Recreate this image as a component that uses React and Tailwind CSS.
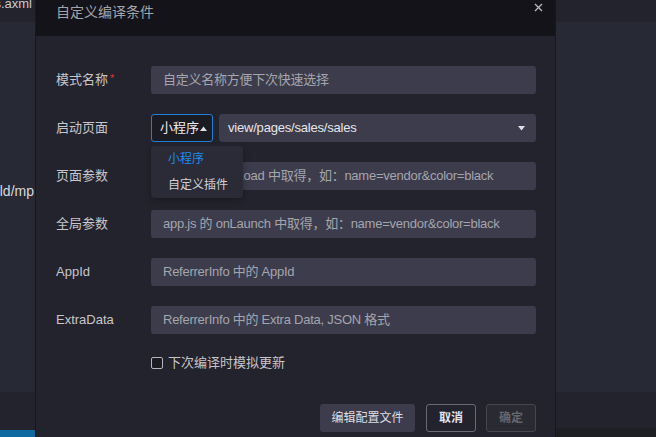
import React from "react";

const font = { fontFamily: '"Liberation Sans", "Noto Sans CJK SC", sans-serif' };

function Field({ label, required, children }) {
  return (
    <div className="flex items-center h-[28px]">
      <div className="w-[95px] text-[13px] text-[#c6c6cb] flex items-center">
        {label}
        {required && <span className="text-[#e0303a] ml-[2px] text-[11px] -mt-[4px]">*</span>}
      </div>
      <div className="flex-1 h-full">{children}</div>
    </div>
  );
}

function Input({ text }) {
  return (
    <div className="h-full w-full bg-[#3c3c4c] rounded-[3px] pl-[12px] flex items-center text-[13px] tracking-[-0.25px] text-[#a5a5ac] whitespace-nowrap overflow-hidden">
      {text}
    </div>
  );
}

export default function App() {
  return (
    <div className="w-[656px] h-[437px] overflow-hidden flex bg-[#22232c]" style={font}>
      {/* left background */}
      <div className="w-[35px] shrink-0 flex flex-col">
        <div className="h-[22px] bg-[#22232c] overflow-hidden flex justify-end">
          <div className="whitespace-nowrap text-[13px] text-[#c9c9cc] leading-[16px] -mt-[4px] pr-[3px]">pages/sales.axml</div>
        </div>
        <div className="h-[370px] bg-[#272a35] overflow-hidden flex flex-col">
          <div className="mt-[160px] flex justify-end overflow-hidden pr-[1px]">
            <div className="whitespace-nowrap text-[14px] text-[#d8d8dc] leading-[18px]">/build/mp</div>
          </div>
        </div>
        <div className="h-[38px] bg-[#22232c]" />
        <div className="flex-1 bg-[#0e6aa0]" />
      </div>

      {/* dialog */}
      <div className="w-[521px] shrink-0 bg-[#23232d] border-l border-r border-[#17171d] flex flex-col relative">
        <div className="h-[36px] bg-[#131319] flex items-start justify-between pl-[20px] pr-[12px]">
          <div className="text-[14px] leading-[20px] mt-[2px] text-[#a3a3aa]">自定义编译条件</div>
          <svg width="9" height="9" viewBox="0 0 9 9" className="mt-[3px]">
            <path d="M1 1 L8 8 M8 1 L1 8" stroke="#b9b9be" strokeWidth="1.3" />
          </svg>
        </div>

        <div className="flex flex-col pl-[20px] pr-[19px] pt-[30px] gap-[20px]">
          <Field label="模式名称" required>
            <Input text="自定义名称方便下次快速选择" />
          </Field>
          <Field label="启动页面">
            <div className="flex h-full gap-[6px] relative">
              <div className="w-[62px] h-full border border-[#1e80d8] rounded-[3px] bg-[#1b1b23] flex items-center pl-[8px] text-[13px] text-[#ececef]">
                小程序
                <svg width="7" height="5" viewBox="0 0 7 5" className="ml-[1px]">
                  <path d="M0 5 L3.5 0.5 L7 5 Z" fill="#e0e0e4" />
                </svg>
              </div>
              <div className="flex-1 h-full bg-[#3c3c4c] rounded-[3px] pl-[9px] pr-[11px] flex items-center justify-between text-[13px] tracking-[-0.2px] text-[#e6e6ea]">
                <span>view/pages/sales/sales</span>
                <svg width="7" height="5" viewBox="0 0 7 5">
                  <path d="M0 0 L7 0 L3.5 4.5 Z" fill="#e0e0e4" />
                </svg>
              </div>
              <div className="absolute left-0 top-[32px] w-[92px] h-[52px] bg-[#2b2b37] rounded-[4px] flex flex-col z-10 shadow-[0_2px_6px_rgba(0,0,0,0.3)]">
                <div className="h-[26px] flex items-center pl-[17px] text-[12px] text-[#1d8cf0]">小程序</div>
                <div className="h-[26px] flex items-center pl-[17px] text-[12px] text-[#d0d0d4]">自定义插件</div>
              </div>
            </div>
          </Field>
          <Field label="页面参数">
            <Input text="page.js 的 onLoad 中取得，如：name=vendor&color=black" />
          </Field>
          <Field label="全局参数">
            <Input text="app.js 的 onLaunch 中取得，如：name=vendor&color=black" />
          </Field>
          <Field label="AppId">
            <Input text="ReferrerInfo 中的 AppId" />
          </Field>
          <Field label="ExtraData">
            <Input text="ReferrerInfo 中的 Extra Data, JSON 格式" />
          </Field>
        </div>

        <div className="pl-[115px] mt-[19px] h-[20px] flex items-center">
          <div className="w-[12px] h-[12px] border border-[#b5b5ba] rounded-[2px] bg-[#1b1b22]" />
          <span className="ml-[5px] text-[13px] text-[#c6c6cb]">下次编译时模拟更新</span>
        </div>

        <div className="mt-[31px] flex justify-end pr-[19px] h-[28px]">
          <div className="w-[95px] h-full bg-[#3c3c4c] rounded-[3px] flex items-center justify-center text-[12px] text-[#dedee2]">编辑配置文件</div>
          <div className="ml-[11px] w-[50px] h-full border border-[#6a6a74] rounded-[3px] flex items-center justify-center text-[12px] font-semibold text-[#e4e4e8]">取消</div>
          <div className="ml-[10px] w-[50px] h-full border border-[#46464f] bg-[#2a2a33] rounded-[3px] flex items-center justify-center text-[12px] font-semibold text-[#66666e]">确定</div>
        </div>
      </div>

      {/* right background */}
      <div className="flex-1 flex flex-col">
        <div className="h-[22px] bg-[#22232c]" />
        <div className="h-[370px] bg-[#272a35]" />
        <div className="h-[36px] bg-[#22232c]" />
        <div className="flex-1 bg-[#1e1f22]" />
      </div>
    </div>
  );
}
